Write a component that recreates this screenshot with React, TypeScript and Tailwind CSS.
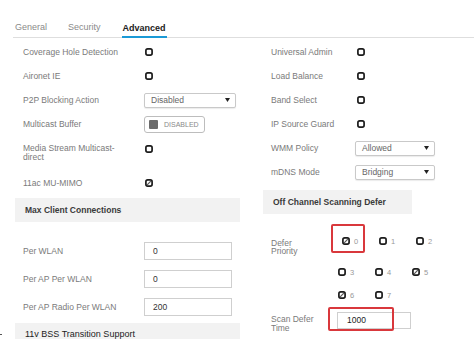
import React from "react";

const font = { fontFamily: '"Liberation Sans", Arial, Helvetica, sans-serif' };

function Check({ checked = false }: { checked?: boolean }) {
  return (
    <svg width="8" height="8" viewBox="0 0 8 8" className="block shrink-0">
      <rect x="0.9" y="0.9" width="6.2" height="6.2" rx="1.8" fill="none" stroke="#1c1c1c" strokeWidth="1.7" />
      {checked && <line x1="2.2" y1="5.8" x2="5.8" y2="2.2" stroke="#555" strokeWidth="1.2" />}
    </svg>
  );
}

function Select({ value, w }: { value: string; w: string }) {
  return (
    <div
      className={`${w} shrink-0 h-[15px] border border-[#c9c9c9] rounded-[2px] bg-white flex items-center justify-between pl-[6px] pr-[5px] shadow-[0_1px_1px_rgba(0,0,0,0.08)]`}
    >
      <span className="text-[8.5px] text-[#666] leading-none">{value}</span>
      <svg width="5" height="4" viewBox="0 0 5 4">
        <path d="M0 0 L5 0 L2.5 4 Z" fill="#222" />
      </svg>
    </div>
  );
}

function TextInput({ value, w }: { value: string; w: string }) {
  return (
    <div className={`${w} shrink-0 h-[18px] border border-[#cfcfcf] bg-white flex items-center pl-[8px]`}>
      <span className="text-[8.5px] text-[#333] leading-none">{value}</span>
    </div>
  );
}

function Row({ label, children, h = "h-[24px]", lw }: { label: React.ReactNode; children?: React.ReactNode; h?: string; lw: string }) {
  return (
    <div className={`flex items-center ${h}`}>
      <div className={`${lw} shrink-0 pl-[8px] text-[8.5px] text-[#7a7a7a] leading-[9px]`}>{label}</div>
      {children}
    </div>
  );
}

function Header({ children, w }: { children: React.ReactNode; w: string }) {
  return (
    <div className={`${w} h-[24px] bg-[#f2f2f2] flex items-center pl-[10px] text-[8.5px] font-bold text-[#3a3a3a]`}>
      {children}
    </div>
  );
}

function Radio({ n, checked = false }: { n: string; checked?: boolean }) {
  return (
    <div className="w-[37px] flex items-center gap-[4px]">
      <Check checked={checked} />
      <span className="text-[7.5px] text-[#999] leading-none mt-[2px]">{n}</span>
    </div>
  );
}

export default function App() {
  return (
    <div className="w-[474px] h-[339px] overflow-hidden bg-white relative" style={font}>
      {/* Tabs */}
      <div className="ml-[13px] border-b border-[#dedede] flex items-end">
        <div className="ml-[2px] pt-[21px] pb-[2px] border-b-2 border-transparent text-[9px] leading-[12px] text-[#8a8a8a]">General</div>
        <div className="ml-[21px] pt-[21px] pb-[2px] border-b-2 border-transparent text-[9px] leading-[12px] text-[#8a8a8a]">Security</div>
        <div className="ml-[21px] px-[1px] pt-[21px] pb-[2px] border-b-2 border-[#1b9ad6] text-[9px] leading-[12px] font-bold text-[#222] -mb-px">Advanced</div>
      </div>

      <div className="flex">
        {/* Left column */}
        <div className="ml-[15px] w-[225px] shrink-0 pt-[2px] flex flex-col">
          <Row label="Coverage Hole Detection" lw="w-[130px]"><Check /></Row>
          <Row label="Aironet IE" lw="w-[130px]"><Check /></Row>
          <Row label="P2P Blocking Action" lw="w-[129px]"><Select value="Disabled" w="w-[92px]" /></Row>
          <Row label="Multicast Buffer" lw="w-[129px]">
            <div className="w-[61px] h-[17px] border border-[#bdbdbd] rounded-[3px] bg-white flex items-center pl-[4px] gap-[6px]">
              <div className="w-[9px] h-[9px] bg-[#6b6b6b] rounded-[1px]" />
              <span className="text-[7px] text-[#8a8a8a] leading-none">DISABLED</span>
            </div>
          </Row>
          <div className="flex items-start h-[35px] pt-[8px]">
            <div className="w-[130px] shrink-0 pl-[8px] text-[8.5px] text-[#7a7a7a] leading-[9px]">
              Media Stream Multicast-
              <br />
              direct
            </div>
            <div className="mt-[1px]"><Check /></div>
          </div>
          <Row label="11ac MU-MIMO" lw="w-[130px]"><Check checked /></Row>
          <div className="mt-[3px]"><Header w="w-[225px]">Max Client Connections</Header></div>
          <div className="mt-[15px]">
            <Row label="Per WLAN" lw="w-[129px]" h="h-[28px]"><TextInput value="0" w="w-[88px]" /></Row>
            <Row label="Per AP Per WLAN" lw="w-[129px]" h="h-[28px]"><TextInput value="0" w="w-[88px]" /></Row>
            <Row label="Per AP Radio Per WLAN" lw="w-[129px]" h="h-[28px]"><TextInput value="200" w="w-[88px]" /></Row>
          </div>
          <div className="mt-[2px]">
            <div className="w-[225px] h-[24px] bg-[#f2f2f2] flex items-center pl-[10px] text-[9px] text-[#222]">
              11v BSS Transition Support
            </div>
          </div>
        </div>

        {/* Right column */}
        <div className="ml-[23px] w-[190px] shrink-0 pt-[2px] flex flex-col">
          <Row label="Universal Admin" lw="w-[94px]"><Check /></Row>
          <Row label="Load Balance" lw="w-[94px]"><Check /></Row>
          <Row label="Band Select" lw="w-[94px]"><Check /></Row>
          <Row label="IP Source Guard" lw="w-[94px]"><Check /></Row>
          <Row label="WMM Policy" lw="w-[92px]"><Select value="Allowed" w="w-[80px]" /></Row>
          <Row label="mDNS Mode" lw="w-[92px]"><Select value="Bridging" w="w-[80px]" /></Row>
          <div className="mt-[6px]"><Header w="w-[149px]">Off Channel Scanning Defer</Header></div>

          <div className="flex">
            <div className="w-[75px] shrink-0 pl-[8px] pt-[24.5px] text-[8.5px] text-[#7a7a7a] leading-[8.5px]">
              Defer
              <br />
              Priority
            </div>
            <div className="pt-[20px] flex flex-col">
              <div className="h-[14px] flex items-center ml-[4px]">
                <Radio n="0" checked />
                <Radio n="1" />
                <Radio n="2" />
              </div>
              <div className="h-[14px] mt-[17px] flex items-center">
                <Radio n="3" />
                <Radio n="4" />
                <Radio n="5" checked />
              </div>
              <div className="h-[14px] mt-[9px] flex items-center">
                <Radio n="6" checked />
                <Radio n="7" />
              </div>
            </div>
          </div>

          <div className="flex mt-[10px]">
            <div className="w-[74px] shrink-0 pl-[8px] pt-[3px] text-[8.5px] text-[#7a7a7a] leading-[8.5px]">
              Scan Defer
              <br />
              Time
            </div>
            <div className="w-[74px] shrink-0 h-[17px] border border-[#cfcfcf] bg-white flex items-center pl-[9px]">
              <span className="text-[8.5px] text-[#222] leading-none">1000</span>
            </div>
          </div>
        </div>
      </div>

      {/* Annotation boxes */}
      <div className="absolute left-[331px] top-[224px] w-[34px] h-[29px] border-2 border-[#d9383c] rounded-[2px]" />
      <div className="absolute left-[328px] top-[307px] w-[66px] h-[24px] border-2 border-[#d9383c] rounded-[2px]" />
      <div className="absolute left-0 top-[334px] w-[2px] h-[1px] bg-[#555]" />
    </div>
  );
}
